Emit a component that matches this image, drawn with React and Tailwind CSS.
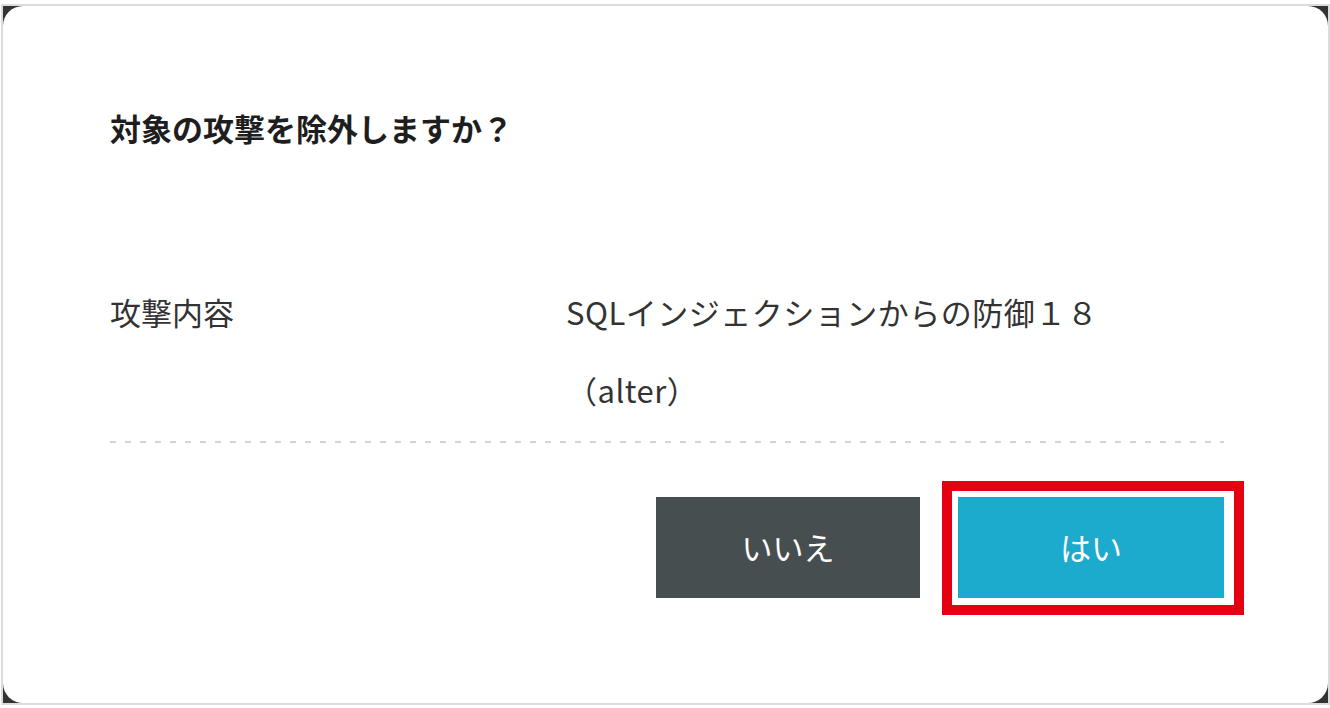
export default function App() {
  const font = { fontFamily: '"Noto Sans CJK JP", "Noto Sans", sans-serif' };
  return (
    <div className="w-[1330px] h-[708px] bg-white overflow-hidden" style={font}>
      <div className="ml-[1px] mt-[4px] w-[1329px] h-[701px] border-2 border-[#dcdcdc] bg-[#333333]">
        <div className="w-full h-full bg-white rounded-[20px] pl-[107px] pr-[104px] pt-[102px]">
          <h1 className="text-[31px] leading-[40px] font-bold text-[#1e1e1e]">対象の攻撃を除外しますか？</h1>
          <div className="mt-[125px] flex text-[31px] leading-[78px] text-[#333333]">
            <div className="w-[456px] shrink-0">攻撃内容</div>
            <div className="tracking-[0.5px]">
              <div>SQLインジェクションからの防御１８</div>
              <div>（alter）</div>
            </div>
          </div>
          <div className="mt-[12px] h-[2px] bg-[repeating-linear-gradient(to_right,#d4d4d4_0px,#d4d4d4_6px,transparent_6px,transparent_15px)]"></div>
          <div className="mt-[54px] flex justify-end gap-[38px]">
            <button className="w-[264px] h-[101px] bg-[#474e50] text-white text-[31px] flex items-center justify-center">いいえ</button>
            <div className="relative">
              <button className="w-[266px] h-[101px] bg-[#1caacd] text-white text-[31px] flex items-center justify-center">はい</button>
              <div className="absolute -left-[16px] -top-[16px] -right-[20px] -bottom-[17px] border-[10px] border-[#e50012] pointer-events-none"></div>
            </div>
          </div>
        </div>
      </div>
    </div>
  );
}
